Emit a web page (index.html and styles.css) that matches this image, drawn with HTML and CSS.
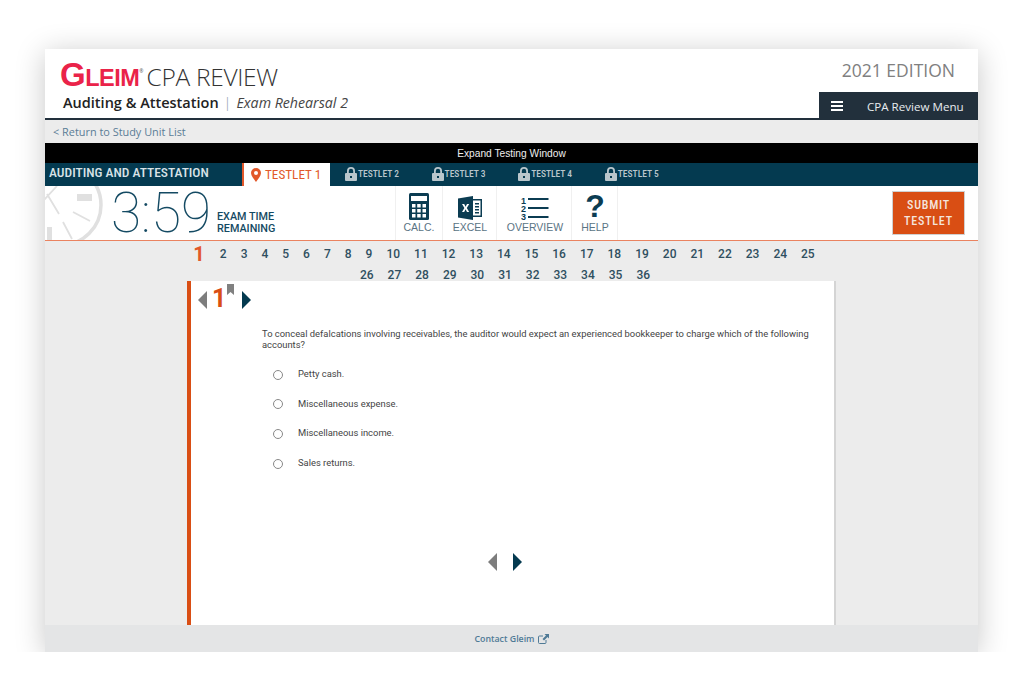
FILE: index.html
```html
<!DOCTYPE HTML>
<html>
	<head>
		<title>Gleim CPA Review</title>
		<link rel="stylesheet" href="styles.css">
	</head>
	<body>
		<div class="frame">
			<!-- top header -->
			<div class="header">
				<div class="brand">
					<div class="logoLine">
						<span class="logo"><span class="logoG">G</span>LEIM</span><span class="reg">&reg;</span>
						<span class="cpa">CPA REVIEW</span>
					</div>
					<div class="subLine">
						<b>Auditing &amp; Attestation</b><span class="pipe">|</span><i>Exam Rehearsal 2</i>
					</div>
				</div>
				<div class="headRight">
					<div class="edition">2021 EDITION</div>
					<div class="menuBtn">
						<svg class="burger" width="12" height="10" viewBox="0 0 12 10"><path d="M0 0h12v2H0zM0 4h12v2H0zM0 8h12v2H0z" fill="#fff"/></svg>
						<span>CPA Review Menu</span>
					</div>
				</div>
			</div>
			<div class="returnBar">&lt; Return to Study Unit List</div>
			<div class="expandBar">Expand Testing Window</div>

			<!-- testlet tabs -->
			<div class="tabBar">
				<div class="examTitle">AUDITING AND ATTESTATION</div>
				<div class="tab tabOn">
					<svg width="10" height="14" viewBox="0 0 10 14"><path fill-rule="evenodd" d="M5 0a5 5 0 0 1 5 5c0 3-3 6-5 9-2-3-5-6-5-9a5 5 0 0 1 5-5zm0 3a2 2 0 1 0 0 4 2 2 0 0 0 0-4z" fill="#e2582a"/></svg>
					<span>TESTLET 1</span>
				</div>
				<div class="tab"><svg class="lock" width="12" height="14" viewBox="0 0 12 14"><path fill-rule="evenodd" d="M2 6V4a4 4 0 0 1 8 0v2h1a1 1 0 0 1 1 1v6a1 1 0 0 1-1 1H1a1 1 0 0 1-1-1V7a1 1 0 0 1 1-1zm1.800 0h4.400V4a2.200 2.200 0 0 0-4.400 0zM5 9v2h2V9z" fill="#b9c6cc"/></svg><span>TESTLET 2</span></div>
				<div class="tab"><svg class="lock" width="12" height="14" viewBox="0 0 12 14"><path fill-rule="evenodd" d="M2 6V4a4 4 0 0 1 8 0v2h1a1 1 0 0 1 1 1v6a1 1 0 0 1-1 1H1a1 1 0 0 1-1-1V7a1 1 0 0 1 1-1zm1.800 0h4.400V4a2.200 2.200 0 0 0-4.400 0zM5 9v2h2V9z" fill="#b9c6cc"/></svg><span>TESTLET 3</span></div>
				<div class="tab"><svg class="lock" width="12" height="14" viewBox="0 0 12 14"><path fill-rule="evenodd" d="M2 6V4a4 4 0 0 1 8 0v2h1a1 1 0 0 1 1 1v6a1 1 0 0 1-1 1H1a1 1 0 0 1-1-1V7a1 1 0 0 1 1-1zm1.800 0h4.400V4a2.200 2.200 0 0 0-4.400 0zM5 9v2h2V9z" fill="#b9c6cc"/></svg><span>TESTLET 4</span></div>
				<div class="tab"><svg class="lock" width="12" height="14" viewBox="0 0 12 14"><path fill-rule="evenodd" d="M2 6V4a4 4 0 0 1 8 0v2h1a1 1 0 0 1 1 1v6a1 1 0 0 1-1 1H1a1 1 0 0 1-1-1V7a1 1 0 0 1 1-1zm1.800 0h4.400V4a2.200 2.200 0 0 0-4.400 0zM5 9v2h2V9z" fill="#b9c6cc"/></svg><span>TESTLET 5</span></div>
			</div>

			<!-- timer + tools -->
			<div class="toolBar">
				<svg class="clock" width="60" height="54" viewBox="0 0 60 54">
					<circle cx="16" cy="19" r="40" fill="none" stroke="#e0e0e0" stroke-width="3.500"/>
					<path d="M32 8h15v7H32z" fill="#e0e0e0"/>
					<path d="M-1 14L12 0M2 8l12 20M28 26l17 9M18 36l9 17" stroke="#e0e0e0" stroke-width="1.800" fill="none"/>
					<path d="M2 41h5v13H2z" fill="#e0e0e0"/>
				</svg>
				<div class="time">3:59</div>
				<div class="timeLabel">EXAM TIME<br>REMAINING</div>
				<div class="tools">
					<div class="tool toolCalc">
						<svg width="20" height="27" viewBox="0 0 20 27"><rect width="20" height="27" rx="1.500" fill="#0b3c52"/><rect x="2" y="3" width="16" height="5" fill="#fff"/><path d="M3 11h3.500v3.500H3zM8.200 11h3.500v3.500H8.200zM13.500 11H17v3.500h-3.500zM3 16h3.500v3.500H3zM8.200 16h3.500v3.500H8.200zM13.500 16H17v3.500h-3.500zM3 21h3.500v3.500H3zM8.200 21h3.500v3.500H8.200zM13.500 21H17v3.500h-3.500z" fill="#fff"/></svg>
						<span>CALC.</span>
					</div>
					<div class="tool toolExcel">
						<svg width="24" height="24" viewBox="0 0 24 24"><path d="M14 3h10v18H14z" fill="#0b3c52"/><path d="M15 4.500h7.500v15H15z" fill="#fff"/><path d="M17 7h4v1.500h-4zM17 10h4v1.500h-4zM17 13h4v1.500h-4zM17 16h4v1.500h-4z" fill="#0b3c52"/><path d="M0 2.500L15 0v24L0 21.500z" fill="#0b3c52"/><path d="M4 8h2.200l1.400 2.700L9 8h2.200l-2.400 4 2.400 4H9l-1.400-2.700L6.200 16H4l2.400-4z" fill="#fff"/></svg>
						<span>EXCEL</span>
					</div>
					<div class="tool toolOver">
						<svg width="28" height="24" viewBox="0 0 28 24">
							<text x="0" y="7.500" class="ovNum">1</text><text x="0" y="15.500" class="ovNum">2</text><text x="0" y="23.500" class="ovNum">3</text>
							<path d="M7 2h20.500v2H7zM7 11h20.500v2H7zM7 20h20.500v2H7z" fill="#0b3c52"/>
						</svg>
						<span>OVERVIEW</span>
					</div>
					<div class="tool toolHelp">
						<span class="qMark">?</span>
						<span>HELP</span>
					</div>
				</div>
				<div class="submit">SUBMIT<br>TESTLET</div>
			</div>

			<!-- question numbers -->
			<div class="numbers">
				<a class="cur">1</a><a>2</a><a>3</a><a>4</a><a>5</a><a>6</a><a>7</a><a>8</a><a>9</a><a>10</a><a>11</a><a>12</a><a>13</a><a>14</a><a>15</a><a>16</a><a>17</a><a>18</a><a>19</a><a>20</a><a>21</a><a>22</a><a>23</a><a>24</a><a>25</a><a>26</a><a>27</a><a>28</a><a>29</a><a>30</a><a>31</a><a>32</a><a>33</a><a>34</a><a>35</a><a>36</a>
			</div>

			<!-- question -->
			<div class="question">
				<div class="qHead">
					<span class="arrowL"></span>
					<span class="qNum">1</span>
					<svg class="flag" width="7" height="11" viewBox="0 0 7 11"><path d="M0 0h7v11L3.500 8 0 11z" fill="#808080"/></svg>
					<span class="arrowR"></span>
				</div>
				<div class="qBody">
					<p class="stem">To conceal defalcations involving receivables, the auditor would expect an experienced bookkeeper to charge which of the following accounts?</p>
					<label class="answer"><span class="radio"></span>Petty cash.</label>
					<label class="answer"><span class="radio"></span>Miscellaneous expense.</label>
					<label class="answer"><span class="radio"></span>Miscellaneous income.</label>
					<label class="answer"><span class="radio"></span>Sales returns.</label>
				</div>
				<div class="qNav">
					<span class="arrowL"></span>
					<span class="arrowR"></span>
				</div>
			</div>

			<div class="footer">
				<span>Contact Gleim</span>
				<svg width="11" height="10" viewBox="0 0 11 10"><path d="M8 6v2.500a1 1 0 0 1-1 1H1.500a1 1 0 0 1-1-1V3a1 1 0 0 1 1-1H5" fill="none" stroke="#4f7a96" stroke-width="1"/><path d="M6.500 0H11v4.500L9.500 3 6 6.500 4.500 5 8 1.500z" fill="#4f7a96"/></svg>
			</div>
		</div>
	</body>
</html>
```

FILE: styles.css
```css
body {
	margin:0;
	background-color:white;
	color:#333;
	font-family:"Open Sans", sans-serif;
}

.frame {
	width:933px;
	height:603px;
	margin:49px 0 0 45px;
	background-color:#ececec;
	box-shadow:0 4px 28px rgba(0,0,0,0.22);
	display:flex;
	flex-direction:column;
}

/* header */
.header {
	height:69px;
	background-color:white;
	border-bottom:2px solid #22303c;
	display:flex;
	justify-content:space-between;
}
.brand {
	padding:9px 0 0 15px;
}
.logoLine {
	height:33px;
	display:flex;
	align-items:baseline;
	white-space:nowrap;
}
.logo {
	font-family:"Liberation Sans", sans-serif;
	font-weight:bold;
	font-size:23.500px;
	line-height:33px;
	color:#ea2349;
	letter-spacing:-0.5px;
}
.logoG {
	font-size:33px;
}
.reg {
	font-size:5px;
	color:#555;
	align-self:flex-start;
	margin:10px 3px 0 0;
}
.cpa {
	font-weight:300;
	font-size:24.500px;
	color:#333;
	letter-spacing:-0.3px;
}
.subLine {
	margin:2px 0 0 3px;
	font-size:14.500px;
	line-height:20px;
	color:#222;
	white-space:nowrap;
}
.subLine b {
	font-weight:600;
}
.subLine i {
	font-weight:400;
	color:#444;
	font-size:14.200px;
}
.pipe {
	margin:0 5px 0 5px;
	color:#8a9aa5;
	font-weight:300;
}
.headRight {
	width:159px;
	display:flex;
	flex-direction:column;
	justify-content:flex-end;
	margin-bottom:-1px;
}
.edition {
	flex:1;
	font-size:17.500px;
	color:#808080;
	padding:9px 23px 0 0;
	text-align:right;
	white-space:nowrap;
	margin-left:-20px;
}
.menuBtn {
	height:27px;
	background-color:#22303c;
	color:#e8ecef;
	font-size:11.600px;
	display:flex;
	align-items:center;
	padding:1px 0 0 12px;
	box-sizing:border-box;
}
.burger {
	margin-right:24px;
}

.returnBar {
	height:23px;
	line-height:24px;
	padding-left:8px;
	font-size:10.900px;
	color:#5b7d96;
}
.expandBar {
	height:20px;
	line-height:21px;
	background-color:black;
	color:#eee;
	font-family:"Liberation Sans", sans-serif;
	font-size:10.200px;
	text-align:center;
}

/* tabs */
.tabBar {
	height:23px;
	background-color:#043a50;
	display:flex;
	align-items:center;
}
.examTitle {
	width:197px;
	padding:0 0 5px 4px;
	box-sizing:border-box;
	font-family:Roboto, sans-serif;
	font-weight:500;
	font-stretch:81%;
	font-size:13.500px;
	color:#d8e2e7;
	white-space:nowrap;
}
.tab {
	width:86.600px;
	display:flex;
	align-items:center;
	gap:1px;
	font-family:Roboto, sans-serif;
	font-weight:500;
	font-stretch:87%;
	font-size:9.500px;
	color:#b9c6cc;
	padding:0 0 2px 16px;
	box-sizing:border-box;
	white-space:nowrap;
}
.tabOn {
	width:88px;
	height:23px;
	background-color:white;
	border-left:2px solid #e2582a;
	padding:0 0 0 7px;
	gap:4px;
	font-stretch:85%;
	font-size:13.200px;
	font-weight:400;
	color:#e2582a;
	margin-right:-1px;
}

/* timer and tools */
.toolBar {
	position:relative;
	height:54px;
	background-color:white;
	border-bottom:1px solid #ea8360;
	display:flex;
	align-items:flex-start;
}
.clock {
	position:absolute;
	left:0;
	top:0;
}
.time {
	margin-left:66px;
	width:106px;
	font-family:Roboto, sans-serif;
	font-weight:100;
	font-size:55px;
	line-height:54px;
	color:#144a63;
	white-space:nowrap;
}
.timeLabel {
	width:178px;
	padding-top:25px;
	font-family:Roboto, sans-serif;
	font-weight:500;
	font-size:10.800px;
	line-height:11.500px;
	color:#144a63;
}
.tools {
	display:flex;
	height:54px;
}
.tool {
	height:54px;
	box-sizing:border-box;
	border-right:1px solid #f0f0f0;
	display:flex;
	flex-direction:column;
	align-items:center;
	justify-content:flex-end;
	padding:0 0 7px 1px;
	font-family:"Liberation Sans", sans-serif;
	font-size:10.500px;
	color:#5a7484;
}
.tool span {
	margin-top:1px;
	line-height:12px;
}
.toolCalc {
	width:48px;
	padding-left:0;
	border-left:1px solid #f0f0f0;
}
.toolExcel {
	width:54px;
}
.toolOver {
	width:75px;
	padding-left:2px;
}
.toolHelp {
	width:46px;
}
.tool .qMark {
	font-family:"Liberation Sans", sans-serif;
	font-weight:bold;
	font-size:32px;
	line-height:25px;
	height:25px;
	color:#0b3c52;
	margin:0 0 1px 0;
}
.ovNum {
	font-family:"Liberation Sans", sans-serif;
	font-weight:bold;
	font-size:9px;
	fill:#0b3c52;
}
.submit {
	position:absolute;
	right:13px;
	top:5px;
	width:73px;
	height:44px;
	box-sizing:border-box;
	background-color:#d94e14;
	border:1px solid #d0d0d0;
	color:#f4e4dc;
	font-family:Roboto, sans-serif;
	font-weight:500;
	font-stretch:85%;
	font-size:12px;
	letter-spacing:0.8px;
	line-height:15.500px;
	text-align:center;
	padding-top:6px;
}

/* number strip */
.numbers {
	height:40px;
	width:640px;
	margin-left:140px;
	padding-top:3px;
	box-sizing:border-box;
	display:flex;
	flex-wrap:wrap;
	justify-content:center;
	align-content:flex-start;
	row-gap:1px;
	font-family:Roboto, sans-serif;
	font-weight:500;
	font-size:12px;
	color:#2f4f60;
}
.numbers a {
	padding:0 7px;
	line-height:20px;
	height:20px;
}
.numbers .cur {
	color:#e2582a;
	font-size:20px;
	font-weight:700;
	padding:0 8px 0 5px;
}

/* question card */
.question {
	flex:1;
	width:649px;
	margin-left:142px;
	box-sizing:border-box;
	background-color:white;
	border-left:4px solid #d94e14;
	border-right:2px solid #d4d4d4;
	display:flex;
	flex-direction:column;
}
.qHead {
	height:38px;
	padding:0 0 0 7px;
	display:flex;
	align-items:center;
}
.qNum {
	font-family:Roboto, sans-serif;
	font-weight:700;
	font-size:25px;
	line-height:25px;
	color:#d94e14;
	margin:-3px 1px 0 5px;
}
.flag {
	align-self:flex-start;
	margin:3px 8px 0 0;
}
.arrowL, .arrowR {
	display:inline-block;
	width:0;
	height:0;
	border-top:9px solid transparent;
	border-bottom:9px solid transparent;
}
.arrowL {
	border-right:9px solid #7d7d7d;
}
.arrowR {
	border-left:9px solid #043a50;
}
.qBody {
	padding:9px 10px 0 71px;
	font-family:Roboto, sans-serif;
	font-size:9.400px;
	color:#444;
}
.stem {
	margin:0 0 9px 0;
	line-height:11px;
}
.answer {
	display:flex;
	align-items:center;
	height:29.600px;
	padding-left:11px;
	white-space:nowrap;
}
.radio {
	width:8px;
	height:8px;
	border:1px solid #888;
	border-radius:50%;
	margin:2px 15px 0 0;
}
.qNav {
	display:flex;
	justify-content:center;
	gap:16px;
	margin:76px 15px 0 0;
}

.footer {
	height:27px;
	background-color:#e4e5e6;
	display:flex;
	align-items:center;
	justify-content:center;
	gap:3px;
	font-size:8.800px;
	font-weight:600;
	color:#4f7a96;
}
```
